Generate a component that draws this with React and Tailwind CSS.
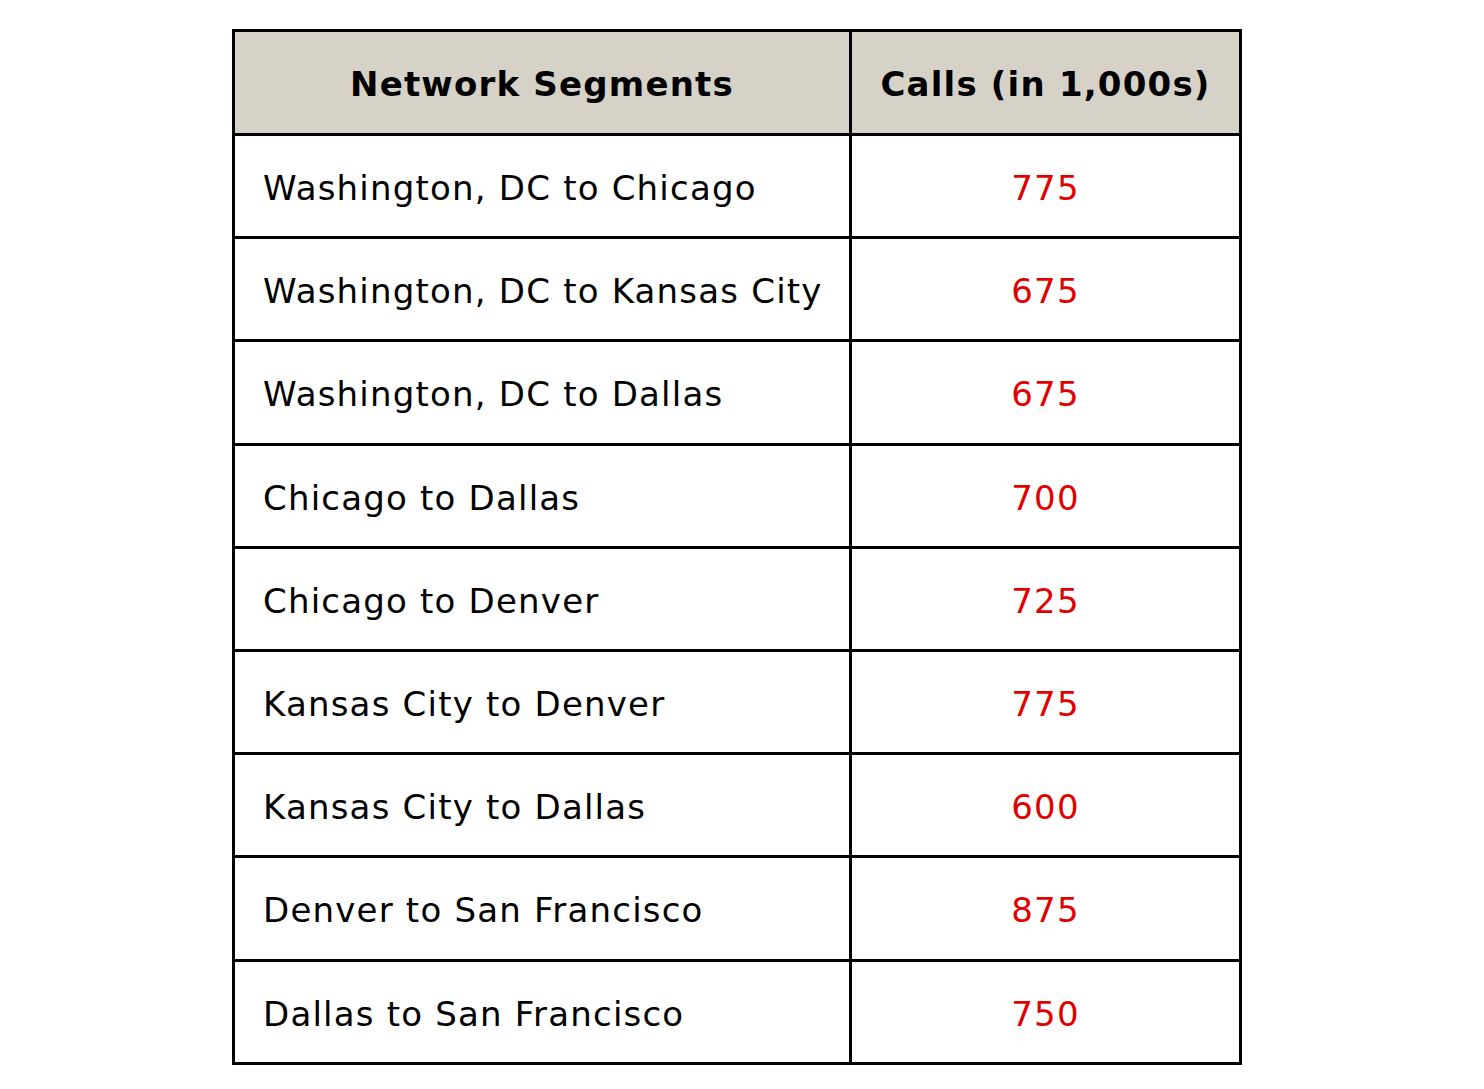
import React from 'react';

const rows = [
  ['Washington, DC to Chicago', '775'],
  ['Washington, DC to Kansas City', '675'],
  ['Washington, DC to Dallas', '675'],
  ['Chicago to Dallas', '700'],
  ['Chicago to Denver', '725'],
  ['Kansas City to Denver', '775'],
  ['Kansas City to Dallas', '600'],
  ['Denver to San Francisco', '875'],
  ['Dallas to San Francisco', '750'],
];

const App = () => {
  return (
    <div className="w-[1484px] h-[1089px] bg-white pt-[29px] pl-[232px] font-['DejaVu_Sans',sans-serif] tracking-[1.2px]">
      <table className="border-collapse table-fixed w-[1007px]">
        <colgroup>
          <col className="w-[617px]" />
          <col className="w-[390px]" />
        </colgroup>
        <thead>
          <tr className="h-[104px] bg-[#d6d2c8]">
            <th className="border-[3px] border-black text-[34px] font-bold text-black text-center pt-[4px]">
              Network Segments
            </th>
            <th className="border-[3px] border-black text-[34px] font-bold text-black text-center pt-[4px]">
              Calls (in 1,000s)
            </th>
          </tr>
        </thead>
        <tbody>
          {rows.map(([segment, calls]) => (
            <tr key={segment} className="h-[103.2px]">
              <td className="border-[3px] border-black text-[34px] text-black pl-[28px] pt-[5px] whitespace-nowrap">
                {segment}
              </td>
              <td className="border-[3px] border-black text-[34px] text-[#e00000] text-center pt-[5px]">
                {calls}
              </td>
            </tr>
          ))}
        </tbody>
      </table>
    </div>
  );
};

export default App;
